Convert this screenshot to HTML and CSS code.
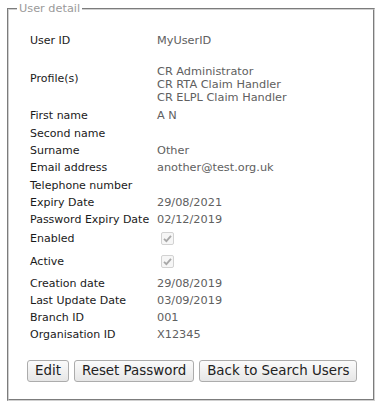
FILE: index.html
```html
<!DOCTYPE html>
<html>
<head>
<meta charset="utf-8">
<link rel="stylesheet" href="styles.css">
</head>
<body>
<fieldset class="panel">
  <legend class="panel-title">User detail</legend>
  <table class="details">
    <tr><td class="lbl">User ID</td><td class="val">MyUserID</td></tr>
    <tr class="profiles"><td class="lbl">Profile(s)</td><td class="val list">CR Administrator<br>CR RTA Claim Handler<br>CR ELPL Claim Handler</td></tr>
    <tr><td class="lbl">First name</td><td class="val">A N</td></tr>
    <tr><td class="lbl">Second name</td><td class="val"></td></tr>
    <tr><td class="lbl">Surname</td><td class="val">Other</td></tr>
    <tr><td class="lbl">Email address</td><td class="val">another@test.org.uk</td></tr>
    <tr><td class="lbl">Telephone number</td><td class="val"></td></tr>
    <tr><td class="lbl">Expiry Date</td><td class="val">29/08/2021</td></tr>
    <tr><td class="lbl">Password Expiry Date</td><td class="val">02/12/2019</td></tr>
    <tr class="chk-row"><td class="lbl">Enabled</td><td class="val"><span class="chk"><svg viewBox="0 0 13 13" width="13" height="13"><path d="M3 6.8 L5.4 9.2 L10 3.8" fill="none" stroke="#a8a8a8" stroke-width="1.8"/></svg></span></td></tr>
    <tr class="chk-row tall"><td class="lbl">Active</td><td class="val"><span class="chk"><svg viewBox="0 0 13 13" width="13" height="13"><path d="M3 6.8 L5.4 9.2 L10 3.8" fill="none" stroke="#a8a8a8" stroke-width="1.8"/></svg></span></td></tr>
    <tr><td class="lbl">Creation date</td><td class="val">29/08/2019</td></tr>
    <tr><td class="lbl">Last Update Date</td><td class="val">03/09/2019</td></tr>
    <tr><td class="lbl">Branch ID</td><td class="val">001</td></tr>
    <tr><td class="lbl">Organisation ID</td><td class="val">X12345</td></tr>
  </table>
  <div class="actions">
    <button class="btn">Edit</button>
    <button class="btn">Reset Password</button>
    <button class="btn">Back to Search Users</button>
  </div>
</fieldset>
</body>
</html>
```
FILE: styles.css
```css
html, body {
  margin: 0;
  padding: 0;
  background: #fff;
}
body {
  font-family: "DejaVu Sans", Verdana, sans-serif;
}
.panel {
  margin: 2px 0 0 7px;
  width: 368px;
  height: 399px;
  box-sizing: border-box;
  padding: 0;
  border: 2px groove #d0d0d0;
}
.panel-title {
  margin-left: 8px;
  padding: 0 2px;
  font-size: 11.3px;
  line-height: 14px;
  color: #9a9a9a;
}
.details {
  border-collapse: collapse;
  margin: 16px 0 0 21px;
}
.details td {
  padding: 0;
  height: 17.3px;
  line-height: 17px;
  vertical-align: middle;
}
.lbl {
  width: 127px;
  font-size: 11px;
  color: #1a1a1a;
  white-space: nowrap;
}
.val {
  font-size: 11.3px;
  color: #606060;
}
.details .profiles td {
  height: 58px;
}
.details .val.list {
  box-sizing: border-box;
  padding: 16px 0 3px;
  line-height: 13px;
}
.details .chk-row td {
  height: 21px;
}
.details .chk-row.tall td {
  height: 25px;
}
.chk {
  display: block;
  width: 11px;
  height: 11px;
  margin-left: 4px;
  border: 1px solid #d2d2d2;
  border-radius: 2px;
  background: #f6f6f6;
  position: relative;
}
.chk svg {
  position: absolute;
  left: -1px;
  top: -1px;
}
.actions {
  display: flex;
  gap: 5px;
  margin: 16px 0 0 18px;
}
.btn {
  height: 22px;
  padding: 0 7px;
  font-family: "DejaVu Sans", Verdana, sans-serif;
  font-size: 13.4px;
  color: #222;
  background: linear-gradient(#fbfbfb, #e6e6e6);
  border: 1px solid #acacac;
  border-radius: 3px;
}
```
